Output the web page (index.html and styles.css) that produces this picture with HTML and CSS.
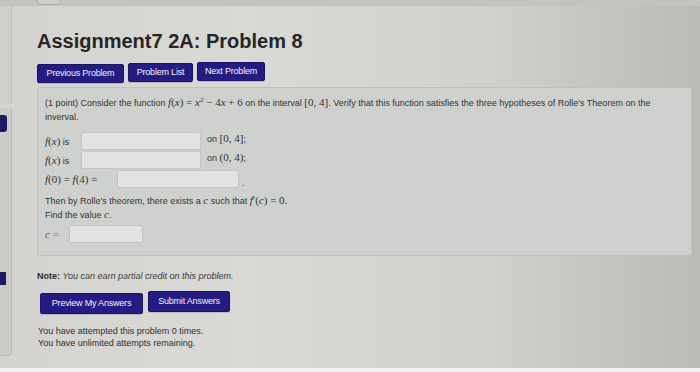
FILE: index.html
```html
<!DOCTYPE html>
<html>
<head>
<meta charset="utf-8">
<link rel="stylesheet" href="styles.css">
</head>
<body>
<div class="screen">
  <aside class="sidebar">
    <div class="side-top"></div>
    <div class="side-panel">
      <div class="pill pill-a"></div>
      <div class="pill pill-b"></div>
    </div>
  </aside>
  <main class="main">
    <div class="topbar"><span class="top-btn"></span></div>
    <h1 class="title">Assignment7 2A: Problem 8</h1>
    <nav class="nav">
      <button class="btn">Previous Problem</button>
      <button class="btn">Problem List</button>
      <button class="btn">Next Problem</button>
    </nav>
    <section class="problem">
      <p class="line">(1 point) Consider the function <span class="m">f</span><span class="mr">(</span><span class="m">x</span><span class="mr">) = </span><span class="m">x</span><sup class="mr">2</sup><span class="mr"> − 4</span><span class="m">x</span><span class="mr"> + 6</span> on the interval <span class="mr">[0, 4]</span>. Verify that this function satisfies the three hypotheses of Rolle's Theorem on the</p>
      <p class="line">inverval.</p>
      <div class="rows">
        <div class="row"><span class="lbl"><span class="m">f</span><span class="mr">(</span><span class="m">x</span><span class="mr">)</span> is</span><span class="inp w120"></span><span class="after">on <span class="mr">[0, 4]</span>;</span></div>
        <div class="row"><span class="lbl"><span class="m">f</span><span class="mr">(</span><span class="m">x</span><span class="mr">)</span> is</span><span class="inp w120"></span><span class="after">on <span class="mr">(0, 4)</span>;</span></div>
        <div class="row"><span class="lbl wide"><span class="m">f</span><span class="mr">(0) = </span><span class="m">f</span><span class="mr">(4) =</span></span><span class="inp w122"></span><span class="dot">.</span></div>
      </div>
      <p class="line then">Then by Rolle's theorem, there exists a <span class="m">c</span> such that <span class="m">f</span><span class="mr">′(</span><span class="m">c</span><span class="mr">) = 0.</span></p>
      <p class="line">Find the value <span class="m">c</span>.</p>
      <div class="row crow"><span class="lbl short"><span class="m">c</span><span class="mr"> =</span></span><span class="inp w74"></span></div>
    </section>
    <p class="note"><b>Note:</b> <i>You can earn partial credit on this problem.</i></p>
    <div class="actions">
      <button class="btn btn-lg">Preview My Answers</button>
      <button class="btn btn-lg">Submit Answers</button>
    </div>
    <div class="attempts">
      <p>You have attempted this problem 0 times.</p>
      <p>You have unlimited attempts remaining.</p>
    </div>
  </main>
</div>
</body>
</html>
```
FILE: styles.css
```css
* { box-sizing: border-box; }
html, body {
  margin: 0;
  padding: 0;
  width: 700px;
  height: 372px;
  overflow: hidden;
}
body {
  font-family: "Liberation Sans", Arial, sans-serif;
  color: #2f2f2f;
  background: linear-gradient(90deg, #d4d3cf 0%, #d9d9d5 35%, #d0d1cd 70%, #b9bbb7 100%);
}
.screen {
  display: flex;
  height: 372px;
  border-bottom: 4px solid #f1f1ef;
}
.sidebar {
  width: 12px;
  flex: none;
  display: flex;
  flex-direction: column;
}
.side-top {
  height: 104px;
  background: #d0cfcb;
  border-right: 1px solid #bdbcb8;
}
.side-panel {
  margin-top: 4px;
  height: 248px;
  background: #cbcbc7;
  border-right: 1px solid #bcbcb8;
  border-bottom: 1px solid #bcbcb8;
  border-bottom-right-radius: 4px;
  display: flex;
  flex-direction: column;
}
.pill {
  width: 7px;
  background: #1d1a63;
  border-radius: 0 3px 3px 0;
}
.pill-a { margin-top: 7px; height: 17px; }
.pill-b { margin-top: 140px; height: 13px; border-radius: 0; width: 6px; }
.main {
  margin-left: 25px;
  flex: 1;
  display: flex;
  flex-direction: column;
}
.topbar {
  height: 6px;
  margin-left: -37px;
  background: #c5c3c0;
  position: relative;
}
.top-btn {
  position: absolute;
  left: 37px;
  top: -4px;
  width: 24px;
  height: 9px;
  border: 1px solid #b0aeab;
  border-radius: 3px;
  background: #cfcdca;
}
.title {
  margin: 23px 0 0 0;
  font-size: 20px;
  line-height: 24px;
  font-weight: bold;
  color: #262626;
}
.nav {
  margin-top: 11px;
  display: flex;
  gap: 4px;
  align-items: flex-start;
}
.btn {
  font-family: "Liberation Sans", Arial, sans-serif;
  font-size: 9px;
  letter-spacing: -0.2px;
  white-space: nowrap;
  color: #f2f2f8;
  background: #241c82;
  border: 1px solid #1a1560;
  border-radius: 2px;
  height: 19px;
  padding: 0 4px;
  line-height: 17px;
  box-shadow: 0 1px 1px rgba(0,0,0,0.15);
}
.nav .btn:nth-child(1) { width: 87px; }
.nav .btn:nth-child(2) { width: 65px; margin-top: -1px; }
.nav .btn:nth-child(3) { width: 68px; margin-top: -2px; }
.problem {
  margin-top: 4px;
  width: 655px;
  background: #cfd1ce;
  border: 1px solid #bfc1be;
  border-radius: 3px;
  padding: 8px 7px 12px 7px;
  font-size: 9px;
  color: #333;
}
.line {
  margin: 0;
  height: 14px;
  line-height: 14px;
  white-space: nowrap;
}
.m {
  font-family: "Liberation Serif", "Times New Roman", serif;
  font-style: italic;
  font-size: 11px;
  line-height: 10px;
}
.mr {
  font-family: "Liberation Serif", "Times New Roman", serif;
  font-size: 11px;
  line-height: 10px;
}
sup.mr { font-size: 7px; vertical-align: 4px; line-height: 0; }
.rows {
  margin-top: 8px;
  display: flex;
  flex-direction: column;
  gap: 1px;
}
.row {
  display: flex;
  align-items: center;
  height: 18px;
}
.lbl { width: 36px; white-space: nowrap; }
.lbl.wide { width: 72px; }
.lbl.short { width: 24px; color: #777; }
.lbl.short .m { color: #555; }
.inp {
  height: 18px;
  background: #e2e3e0;
  border: 1px solid #c3c5c2;
  border-radius: 2px;
}
.w120 { width: 120px; }
.w122 { width: 122px; }
.w74 { width: 74px; }
.after { margin-left: 6px; align-self: flex-start; line-height: 14px; }
.dot { margin-left: 3px; margin-top: 8px; }
.then { margin-top: 6px; }
.crow { margin-top: 3px; }
.note {
  margin: 13px 0 0 0;
  font-size: 9px;
  line-height: 14px;
  color: #2a2a2a;
}
.note i { color: #3a3a3a; }
.actions {
  margin-top: 8px;
  display: flex;
  gap: 5px;
  padding-left: 3px;
  align-items: flex-start;
}
.btn-lg {
  height: 21px;
  line-height: 19px;
  padding: 0 6px;
}
.actions .btn:nth-child(1) { width: 103px; margin-top: 2px; }
.actions .btn:nth-child(2) { width: 82px; }
.attempts {
  margin-top: 11px;
  padding-left: 1px;
  font-size: 9px;
  line-height: 12px;
  color: #2f2f2f;
}
.attempts p { margin: 0; }
```
